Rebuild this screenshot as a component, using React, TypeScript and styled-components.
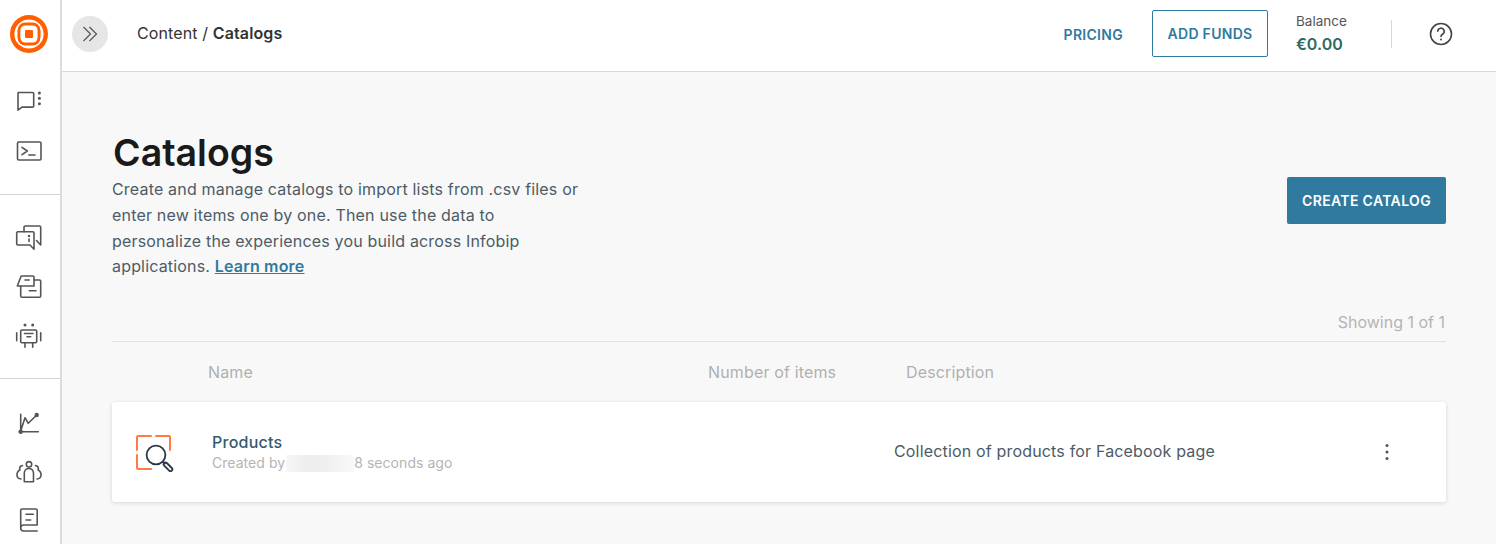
import React from "react";
import styled, { createGlobalStyle } from "styled-components";

const GlobalStyle = createGlobalStyle`
    html, body {
        margin: 0;
        padding: 0;
        height: 100%;
        background: #f8f8f8;
        font-family: "Inter", "Liberation Sans", sans-serif;
    }
    * {
        box-sizing: border-box;
    }
`;

const Page = styled.div`
    display: flex;
    height: 544px;
    overflow: hidden;
`;

const Sidebar = styled.aside`
    width: 62px;
    flex-shrink: 0;
    background: #fff;
    border-right: 2px solid #dcdcdc;
    overflow: hidden;
`;

const LogoSlot = styled.div`
    display: flex;
    justify-content: center;
    padding: 15px 3px 0 0;
    height: 75px;
`;

const SideGroup = styled.div<{ $top: number; $bottom: number }>`
    padding: ${(p) => p.$top}px 0 ${(p) => p.$bottom}px;
    border-bottom: 1px solid #d4d4d4;

    &:last-child {
        border-bottom: none;
    }
`;

const SideItem = styled.a`
    display: flex;
    align-items: center;
    justify-content: center;
    height: 50px;
    color: #555;
`;

const Main = styled.div`
    flex: 1;
    min-width: 0;
    display: flex;
    flex-direction: column;
`;

const Header = styled.header`
    display: flex;
    align-items: center;
    height: 72px;
    padding: 0 42px 3px 10px;
    background: #fff;
    border-bottom: 1px solid #d8d8d8;
`;

const CollapseButton = styled.button`
    display: flex;
    align-items: center;
    justify-content: center;
    width: 36px;
    height: 36px;
    padding: 0;
    border: none;
    border-radius: 50%;
    background: #e6e6e6;
    color: #555;
`;

const Breadcrumb = styled.div`
    margin: 0 0 2px 29px;
    font-size: 16px;
    letter-spacing: 0.12px;
    color: #333;

    strong {
        font-weight: 600;
    }
`;

const HeaderRight = styled.div`
    margin-left: auto;
    display: flex;
    align-items: center;
`;

const PricingLink = styled.a`
    font-size: 14px;
    font-weight: 600;
    letter-spacing: 0.3px;
    color: #2f7a9e;
`;

const FundsButton = styled.button`
    width: 116px;
    height: 47px;
    margin: 0 0 1px 29px;
    background: #fff;
    border: 1px solid #2f7a9e;
    border-radius: 2px;
    font-family: inherit;
    font-size: 14px;
    font-weight: 600;
    letter-spacing: 0.3px;
    color: #2f7a9e;
`;

const BalanceBox = styled.div`
    width: 96px;
    margin-left: 28px;
    border-right: 1px solid #d8d8d8;
    height: 28px;
`;

const BalanceText = styled.div`
    margin-top: -7px;
`;

const BalanceLabel = styled.div`
    font-size: 13.5px;
    line-height: 16px;
    color: #555;
`;

const BalanceValue = styled.div`
    margin-top: 5px;
    font-size: 16px;
    line-height: 20px;
    font-weight: 600;
    color: #2e6b5e;
`;

const HelpButton = styled.a`
    display: flex;
    margin-left: 36px;
    color: #444;
`;

const Content = styled.main`
    flex: 1;
    padding: 61px 50px 0;
    background: #f8f8f8;
`;

const Intro = styled.section`
    display: flex;
    justify-content: space-between;
    align-items: flex-start;
`;

const IntroText = styled.div`
    width: 470px;
`;

const Title = styled.h1`
    margin: 0;
    padding-left: 1px;
    font-size: 37.5px;
    line-height: 40px;
    font-weight: 560;
    color: #1a1a1a;
`;

const Lead = styled.p`
    margin: 4px 0 0;
    font-size: 16px;
    letter-spacing: 0.18px;
    line-height: 25.75px;
    color: #4d5b66;

    a {
        font-weight: 600;
        color: #2f7a9e;
        text-decoration: underline;
    }
`;

const CreateButton = styled.button`
    width: 159px;
    height: 47px;
    margin-top: 44px;
    background: #2f7a9e;
    border: none;
    border-radius: 2px;
    font-family: inherit;
    font-size: 14px;
    font-weight: 600;
    letter-spacing: 0.35px;
    color: #fff;
`;

const ShowingRow = styled.div`
    margin-top: 32px;
    padding: 0 1px 9px 0;
    border-bottom: 1px solid #e2e2e2;
    text-align: right;
    font-size: 16px;
    line-height: 20px;
    color: #b4b4b4;
`;

const TableHead = styled.div`
    display: grid;
    grid-template-columns: 500px 198px 1fr;
    padding: 20px 0 20px 96px;
    font-size: 16px;
    letter-spacing: 0.15px;
    line-height: 20px;
    color: #b0b0b0;
`;

const Card = styled.div`
    display: grid;
    grid-template-columns: 76px 682px 1fr auto;
    align-items: center;
    height: 100px;
    padding: 0 56px 0 24px;
    background: #fff;
    border-radius: 3px;
    box-shadow: 0 1px 4px rgba(0, 0, 0, 0.14);
`;

const CardIcon = styled.div`
    display: flex;
`;

const ItemName = styled.div`
    font-size: 16px;
    letter-spacing: 0.25px;
    line-height: 20px;
    font-weight: 450;
    color: #335a72;
`;

const ItemMeta = styled.div`
    display: flex;
    align-items: center;
    margin-top: 2px;
    font-size: 14px;
    letter-spacing: 0.05px;
    line-height: 18px;
    color: #b4b4b4;
`;

const BlurredName = styled.span`
    width: 68px;
    height: 17px;
    margin-left: 1px;
    background: linear-gradient(90deg, #f7f7f7, #ededed 30%, #f0f0f0 60%, #f8f8f8);
`;

const ItemDescription = styled.div`
    margin-bottom: 2px;
    font-size: 16px;
    letter-spacing: 0.17px;
    color: #4d5b66;
`;

const MoreButton = styled.div`
    display: flex;
    color: #555;
`;

const icon = {
    width: 30,
    height: 30,
    viewBox: "0 0 30 30",
    fill: "none",
    stroke: "currentColor",
    strokeWidth: 1.6,
    strokeLinecap: "round" as const,
    strokeLinejoin: "round" as const,
};

const Logo = () => (
    <svg width="38" height="38" viewBox="0 0 38 38" fill="none">
        <circle cx="19" cy="19" r="19" fill="#ff5f00" />
        <circle cx="19" cy="19" r="14.6" fill="#fff" />
        <rect x="7.5" y="7.5" width="23" height="23" rx="8" fill="#ff5f00" />
        <rect x="10.4" y="10.4" width="17.2" height="17.2" rx="5" fill="#fff" />
        <rect x="15" y="15" width="8" height="8" rx="1" fill="#ff5f00" />
    </svg>
);

const ChatIcon = () => (
    <svg {...icon}>
        <path d="M3.5 7.5h14a1.2 1.2 0 0 1 1.2 1.2v12.2a1.2 1.2 0 0 1-1.2 1.2H7l-4 3V8.7a1.2 1.2 0 0 1 .5-1.2z" />
        <g fill="currentColor" stroke="none">
            <circle cx="24.4" cy="8" r="1.5" />
            <circle cx="24.4" cy="13.3" r="1.5" />
            <circle cx="24.4" cy="18.8" r="1.5" />
        </g>
    </svg>
);

const TerminalIcon = () => (
    <svg {...icon}>
        <rect x="2.5" y="7" width="23.5" height="18" rx="1.2" />
        <path d="M7 12.3l5.3 3.7L7 19.7M13.8 20H20" />
    </svg>
);

const CopyChatIcon = () => (
    <svg {...icon}>
        <path d="M9 9.7V5.2A1.2 1.2 0 0 1 10.2 4h14.3a1.2 1.2 0 0 1 1.2 1.2V23l-4.2-4.5" />
        <path d="M2.9 9.7H17.8A1.2 1.2 0 0 1 19 10.9v16.4L15 23H2.9a1.2 1.2 0 0 1-1.2-1.2V10.9a1.2 1.2 0 0 1 1.2-1.2z" />
        <path d="M14 17v2.5" />
        <circle cx="14" cy="14" r="1.2" fill="currentColor" stroke="none" />
    </svg>
);

const FolderIcon = () => (
    <svg {...icon}>
        <path d="M2.3 14L5.7 5.2A1.2 1.2 0 0 1 6.9 4h10.9A1.2 1.2 0 0 1 19 5.2V14z" />
        <path d="M19 8h5.5a1.2 1.2 0 0 1 1.2 1.2v14.9a1.2 1.2 0 0 1-1.2 1.2H6.9a1.2 1.2 0 0 1-1.2-1.2V14" />
        <path d="M10 8h4.3M14.3 18.7H21" />
    </svg>
);

const BotIcon = () => (
    <svg {...icon}>
        <rect x="5.7" y="8" width="16" height="12.7" rx="1.2" />
        <path d="M9.5 11.5h8.5M12 14.7h3.7M10 20.7v4.6M17.7 20.7v4.6M1.7 10.7v8M25.7 10.7v8" />
        <g fill="currentColor" stroke="none">
            <circle cx="10" cy="3" r="1.5" />
            <circle cx="17.7" cy="3" r="1.5" />
        </g>
    </svg>
);

const ChartIcon = () => (
    <svg {...icon}>
        <path d="M5.7 7.3v17.4M4.3 24.7h19M5.7 24l4.3-13.3 3.3 5.6L21.7 8" />
        <circle cx="21.7" cy="8" r="2.2" fill="currentColor" stroke="none" />
        <circle cx="5.7" cy="24.7" r="2.2" fill="currentColor" stroke="none" />
    </svg>
);

const PeopleIcon = () => (
    <svg {...icon}>
        <circle cx="14" cy="7.3" r="2.7" />
        <path d="M9.3 24.7v-8.7a4.6 4.6 0 0 1 9.2 0v8.7z" />
        <path d="M7.5 8.6a2.8 2.8 0 0 0-2.5 4.2C3 14 1.8 16 2 18.5c.2 2 1.5 3.3 4 3.5" />
        <path d="M20.5 8.6a2.8 2.8 0 0 1 2.5 4.2c2 1.2 3.2 3.2 3 5.7-.2 2-1.5 3.3-4 3.5" />
    </svg>
);

const BookIcon = () => (
    <svg {...icon}>
        <path d="M5.7 20.5V3.2A1.2 1.2 0 0 1 6.9 2h14.1a1.2 1.2 0 0 1 1.2 1.2V18H9a3.2 3.2 0 0 0-3.3 3 3 3 0 0 0 3 3h13.5" />
        <path d="M11 7.3h7.3M11 13h4.7" />
    </svg>
);

const ScanSearchIcon = () => (
    <svg width="40" height="40" viewBox="0 0 40 40" fill="none" strokeLinecap="round" strokeLinejoin="round">
        <g stroke="#ff7a45" strokeWidth="2">
            <path d="M1 18V5a1 1 0 0 1 1-1h13M20 4h13a1 1 0 0 1 1 1v13M1 23v13a1 1 0 0 0 1 1h13" />
        </g>
        <g stroke="#2b3648" strokeWidth="1.8">
            <circle cx="20" cy="23" r="9.4" />
            <path d="M27 30l2 1.5" />
            <path d="M30.8 31l5 5a1.8 1.8 0 0 1-2.6 2.6l-5-5a1.8 1.8 0 0 1 2.6-2.6z" />
        </g>
    </svg>
);

const DoubleChevron = () => (
    <svg width="18" height="18" viewBox="0 0 18 18" fill="none" stroke="currentColor" strokeWidth="1.2">
        <path d="M2.5 2l7 7-7 7M8.5 2l7 7-7 7" />
    </svg>
);

const HelpIcon = () => (
    <svg width="26" height="26" viewBox="0 0 26 26" fill="none" stroke="currentColor" strokeWidth="1.6" strokeLinecap="round">
        <circle cx="13" cy="13" r="10.5" />
        <path d="M9.8 10.3a3.2 3.2 0 1 1 4.7 2.9c-1 .6-1.5 1.2-1.5 2.3" />
        <circle cx="13" cy="18.6" r="1" fill="currentColor" stroke="none" />
    </svg>
);

const DotsIcon = () => (
    <svg width="6" height="18" viewBox="0 0 6 18" fill="currentColor">
        <circle cx="3" cy="2.5" r="1.5" />
        <circle cx="3" cy="9" r="1.5" />
        <circle cx="3" cy="15.5" r="1.5" />
    </svg>
);

const App = () => {
    return (
        <>
            <GlobalStyle />
            <Page>
                <Sidebar>
                    <LogoSlot>
                        <Logo />
                    </LogoSlot>
                    <SideGroup $top={0} $bottom={19}>
                        <SideItem><ChatIcon /></SideItem>
                        <SideItem><TerminalIcon /></SideItem>
                    </SideGroup>
                    <SideGroup $top={17} $bottom={16}>
                        <SideItem><CopyChatIcon /></SideItem>
                        <SideItem><FolderIcon /></SideItem>
                        <SideItem><BotIcon /></SideItem>
                    </SideGroup>
                    <SideGroup $top={18} $bottom={0}>
                        <SideItem><ChartIcon /></SideItem>
                        <SideItem><PeopleIcon /></SideItem>
                        <SideItem><BookIcon /></SideItem>
                    </SideGroup>
                </Sidebar>
                <Main>
                    <Header>
                        <CollapseButton><DoubleChevron /></CollapseButton>
                        <Breadcrumb>Content / <strong>Catalogs</strong></Breadcrumb>
                        <HeaderRight>
                            <PricingLink>PRICING</PricingLink>
                            <FundsButton>ADD FUNDS</FundsButton>
                            <BalanceBox>
                                <BalanceText>
                                    <BalanceLabel>Balance</BalanceLabel>
                                    <BalanceValue>€0.00</BalanceValue>
                                </BalanceText>
                            </BalanceBox>
                            <HelpButton><HelpIcon /></HelpButton>
                        </HeaderRight>
                    </Header>
                    <Content>
                        <Intro>
                            <IntroText>
                                <Title>Catalogs</Title>
                                <Lead>
                                    Create and manage catalogs to import lists from .csv files or
                                    enter new items one by one. Then use the data to
                                    personalize the experiences you build across Infobip
                                    applications. <a>Learn more</a>
                                </Lead>
                            </IntroText>
                            <CreateButton>CREATE CATALOG</CreateButton>
                        </Intro>
                        <ShowingRow>Showing 1 of 1</ShowingRow>
                        <TableHead>
                            <span>Name</span>
                            <span>Number of items</span>
                            <span>Description</span>
                        </TableHead>
                        <Card>
                            <CardIcon><ScanSearchIcon /></CardIcon>
                            <div>
                                <ItemName>Products</ItemName>
                                <ItemMeta>Created by<BlurredName />8 seconds ago</ItemMeta>
                            </div>
                            <ItemDescription>Collection of products for Facebook page</ItemDescription>
                            <MoreButton><DotsIcon /></MoreButton>
                        </Card>
                    </Content>
                </Main>
            </Page>
        </>
    );
};

export default App;
